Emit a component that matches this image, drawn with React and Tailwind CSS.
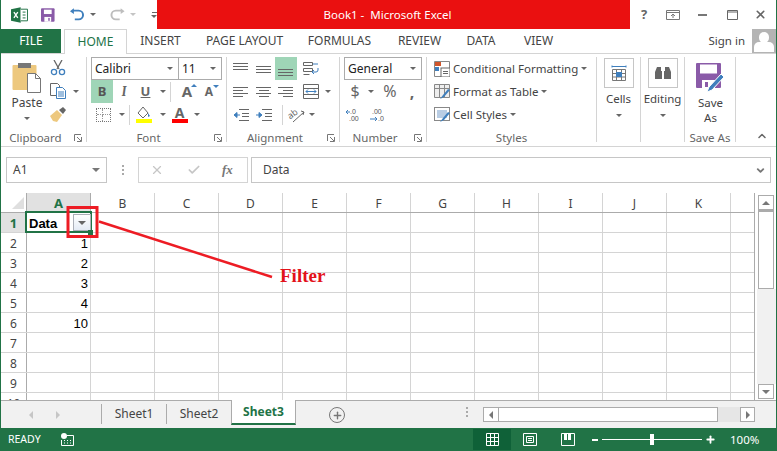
import { ChevronDown, ChevronUp, X, Check, Plus } from "lucide-react";

const COLS = ["B", "C", "D", "E", "F", "G", "H", "I", "J", "K"];
const ROWS = [1, 2, 3, 4, 5, 6, 7, 8, 9, 10];
const VALUES = { 2: "1", 3: "2", 4: "3", 5: "4", 6: "10" };

function Caret({ className = "" }) {
  return <span className={`inline-block w-0 h-0 border-x-[3px] border-x-transparent border-t-[3px] border-t-[#666] ${className}`} />;
}

function Lines({ widths, color = "#666" }) {
  return (
    <svg width="16" height="14" viewBox="0 0 16 14">
      {widths.map((w, i) => (
        <rect key={i} x={w[0]} y={w[2]} width={w[1]} height="1" fill={color} />
      ))}
    </svg>
  );
}

function Launcher() {
  return (
    <svg width="8" height="8" viewBox="0 0 8 8" className="shrink-0">
      <path d="M.5 7V.5H7M7.5 3v4.5H3M3 3l4 4" fill="none" stroke="#777" />
    </svg>
  );
}

function Group({ width, label, launcher, children }) {
  return (
    <div className="flex flex-col h-[85px] border-r border-[#d4d4d4] shrink-0" style={{ width }}>
      <div className="flex-1 min-h-0">{children}</div>
      <div className={`h-[18px] mb-[-5px] flex items-center justify-center relative text-[11.5px] text-[#666] ${launcher ? "pr-[16px]" : ""}`}>
        {label}
        {launcher && <span className="absolute right-[4px] top-[5px] flex"><Launcher /></span>}
      </div>
    </div>
  );
}

function Cell({ w, hl, children }) {
  return (
    <div className={`h-[23px] flex items-center justify-center shrink-0 ${hl ? "bg-[#9fd5b7]" : ""}`} style={{ width: w }}>
      {children}
    </div>
  );
}

function TitleBar() {
  return (
    <div className="h-[29px] flex items-center bg-white shrink-0">
      <div className="w-[156px] flex items-center shrink-0 pl-[10px]">
        <svg width="18" height="16" viewBox="0 0 18 16">
          <path d="M0 2l10-2v16L0 14z" fill="#217346" />
          <path d="M10 2h7v12h-7" fill="#fff" stroke="#217346" />
          <path d="M12 5h3M12 8h3M12 11h3" stroke="#217346" />
          <path d="M3 5l4 6M7 5l-4 6" stroke="#fff" strokeWidth="1.4" />
        </svg>
        <svg width="14" height="14" viewBox="0 0 14 14" className="ml-[13px]">
          <rect width="14" height="14" rx="1" fill="#8a5ba8" />
          <rect x="3" y="1.5" width="8" height="4.5" fill="#fff" />
          <rect x="3.5" y="9" width="7" height="5" fill="#fff" />
          <rect x="7.5" y="10" width="1.5" height="3" fill="#8a5ba8" />
        </svg>
        <svg width="16" height="14" viewBox="0 0 16 14" className="ml-[14px]">
          <path d="M4 2.5h6a4.5 4.5 0 0 1 0 9H6" fill="none" stroke="#3f7fbd" strokeWidth="2" />
          <path d="M5 0v6L1 3z" fill="#3f7fbd" />
        </svg>
        <Caret className="ml-[5px]" />
        <svg width="16" height="14" viewBox="0 0 16 14" className="ml-[14px]">
          <path d="M12 2.5H6a4.5 4.5 0 0 0 0 9h4" fill="none" stroke="#bdbdbd" strokeWidth="2" />
          <path d="M11 0v6l4-3z" fill="#bdbdbd" />
        </svg>
        <Caret className="ml-[5px] border-t-[#c4c4c4]" />
        <span className="ml-[15px] flex flex-col items-center gap-[2px]">
          <span className="w-[5px] h-px bg-[#666]" />
          <Caret />
        </span>
      </div>
      <div className="w-[473px] h-full bg-[#ea1010] flex items-center justify-center text-white text-[11.5px] shrink-0 whitespace-pre pr-[12px]">
        Book1 -  Microsoft Excel
      </div>
      <div className="flex-1 flex items-center pl-[11px] text-[#666]">
        <span className="w-[10px] text-[13px] font-bold leading-none">?</span>
        <svg width="14" height="10" viewBox="0 0 14 10" className="ml-[15px]">
          <path d="M.5.5h13v9H.5zM.5 2.5h13M7 8V4M5 6l2-2 2 2" fill="none" stroke="#777" />
        </svg>
        <span className="ml-[18px] w-[9px] h-[2px] bg-[#777]" />
        <svg width="11" height="10" viewBox="0 0 11 10" className="ml-[20px]">
          <path d="M.5 2h10M.5.5h10v9H.5z" fill="none" stroke="#666" />
        </svg>
        <X size={13} strokeWidth={3} className="ml-[16px] text-[#666]" />
      </div>
    </div>
  );
}

function TabRow() {
  const tabs = [
    ["INSERT", "w-[67px]"],
    ["PAGE LAYOUT", "w-[101px]"],
    ["FORMULAS", "w-[89px]"],
    ["REVIEW", "w-[71px]"],
    ["DATA", "w-[52px]"],
    ["VIEW", "w-[63px]"],
  ];
  return (
    <div className="h-[25px] flex items-stretch shrink-0 border-b border-[#d4d4d4] text-[12px] text-[#444]">
      <div className="w-[60px] bg-[#217346] text-white flex items-center justify-center">FILE</div>
      <div className="w-[63px] ml-[3px] h-[25px] bg-white border border-b-0 border-[#d4d4d4] text-[#217346] flex items-center justify-center">HOME</div>
      {tabs.map(([t, w]) => (
        <div key={t} className={`${w} flex items-center justify-center`}>{t}</div>
      ))}
      <div className="flex-1 flex items-center justify-end">
        <span className="mr-[7px] text-[11.5px]">Sign in</span>
        <div className="w-[24px] h-[24px] bg-[#b4b4b4] overflow-hidden flex flex-col items-center">
          <span className="w-[10px] h-[11px] mt-[3px] rounded-full bg-white" />
          <span className="w-[20px] h-[10px] mt-[-1px] rounded-t-[5px] bg-white" />
        </div>
      </div>
    </div>
  );
}

function Clipboard() {
  return (
    <Group width={86} label="Clipboard" launcher>
      <div className="flex pl-[7px] pt-[3px]">
        <div className="w-[38px] flex flex-col items-center pt-[2px]">
          <svg width="30" height="31" viewBox="0 0 30 31">
            <rect x="0.5" y="3" width="24" height="25" rx="1" fill="#edc87e" />
            <rect x="6" y="1" width="13" height="5" fill="#777" />
            <path d="M15.5 11.5h8l5 5v14h-13z" fill="#fff" stroke="#777" />
            <path d="M23.5 11.5v5h5" fill="none" stroke="#777" />
          </svg>
          <span className="text-[12px] text-[#444] leading-[16px] mt-[2px]">Paste</span>
          <Caret className="mt-[6px]" />
        </div>
        <div className="ml-[4px] flex flex-col">
          <svg width="16" height="16" viewBox="0 0 16 16">
            <path d="M4 0l5 9M12 0L7 9" stroke="#666" strokeWidth="1.3" />
            <circle cx="4" cy="12" r="2.6" fill="none" stroke="#3f7fbd" strokeWidth="1.3" />
            <circle cx="12" cy="12" r="2.6" fill="none" stroke="#3f7fbd" strokeWidth="1.3" />
          </svg>
          <div className="flex items-center mt-[7px]">
            <svg width="16" height="16" viewBox="0 0 16 16">
              <path d="M.5.5h7l2 2v10h-9z" fill="#fff" stroke="#666" />
              <path d="M6.5 4.5h6l3 3v8h-9z" fill="#fff" stroke="#3f7fbd" />
              <path d="M8 9h6M8 11h6M8 13h6" stroke="#3f7fbd" />
            </svg>
            <Caret className="ml-[7px]" />
          </div>
          <svg width="16" height="15" viewBox="0 0 16 15" className="mt-[8px]">
            <path d="M0 9l7-6 5 5-5 7-4-1z" fill="#edc87e" />
            <path d="M9 3l4-3 3 3-3 4z" fill="#666" />
          </svg>
        </div>
      </div>
    </Group>
  );
}

function FontGroup() {
  return (
    <Group width={140} label="Font" launcher>
      <div className="pl-[4px]">
        <div className="flex">
          <div className="w-[88px] h-[23px] border border-[#ababab] flex items-center justify-between pl-[3px] pr-[5px] text-[12px] text-[#222]">
            Calibri<Caret />
          </div>
          <div className="w-[43px] h-[23px] border border-l-0 border-[#ababab] flex items-center justify-between pl-[3px] pr-[5px] text-[12px] text-[#222]">
            11<Caret />
          </div>
        </div>
        <div className="flex items-center">
          <Cell w={22} hl><span className="text-[13px] font-bold text-[#555]">B</span></Cell>
          <Cell w={22}><span className="text-[13px] font-bold italic text-[#666] font-serif">I</span></Cell>
          <Cell w={21}><span className="text-[13px] font-bold text-[#666] underline">U</span></Cell>
          <Cell w={14}><Caret /></Cell>
          <span className="w-px h-[20px] bg-[#d4d4d4]" />
          <Cell w={32}>
            <span className="relative text-[15px] text-[#666] font-bold leading-none">A<span className="absolute -right-[5px] top-0 border-x-[3px] border-x-transparent border-b-[3px] border-b-[#3f7fbd]" /></span>
          </Cell>
          <Cell w={12}>
            <span className="relative text-[12px] text-[#666] font-bold leading-none">A<span className="absolute -right-[6px] -top-[1px] border-x-[3px] border-x-transparent border-t-[3px] border-t-[#3f7fbd]" /></span>
          </Cell>
        </div>
        <div className="flex items-center">
          <Cell w={24}>
            <span className="w-[15px] h-[14px] border border-dotted border-[#777] grid grid-cols-2 grid-rows-2">
              <span className="border-r border-b border-dotted border-[#999]" />
              <span className="border-b border-dotted border-[#999]" />
              <span className="border-r border-dotted border-[#999]" />
            </span>
          </Cell>
          <Cell w={14}><Caret /></Cell>
          <span className="w-px h-[20px] bg-[#d4d4d4]" />
          <Cell w={28}>
            <span className="flex flex-col items-center">
              <svg width="14" height="12" viewBox="0 0 14 12">
                <path d="M6 0l5 6-5 5-5-5z" fill="#fff" stroke="#666" />
                <path d="M11 6l2 3-2 1z" fill="#3f7fbd" />
              </svg>
              <span className="w-[16px] h-[4px] bg-[#ffff00]" />
            </span>
          </Cell>
          <Cell w={9}><Caret /></Cell>
          <Cell w={25}>
            <span className="flex flex-col items-center">
              <span className="text-[14px] leading-[12px] font-bold text-[#666]">A</span>
              <span className="w-[16px] h-[4px] bg-[#ff0000]" />
            </span>
          </Cell>
          <Cell w={9}><Caret /></Cell>
        </div>
      </div>
    </Group>
  );
}

function Alignment() {
  const rows = [
    [[[0, 15, 1], [0, 15, 4], [0, 15, 7]], [[0, 15, 4], [0, 15, 7], [0, 15, 10]], [[0, 15, 7], [0, 15, 10], [0, 15, 13]]],
    [[[0, 15, 2], [0, 10, 5], [0, 15, 8], [0, 10, 11]], [[0, 15, 2], [3, 10, 5], [0, 15, 8], [3, 10, 11]], [[0, 15, 2], [5, 10, 5], [0, 15, 8], [5, 10, 11]]],
  ];
  return (
    <Group width={113} label="Alignment" launcher>
      <div className="pl-[2px]">
        <div className="flex">
          <Cell w={23}><Lines widths={rows[0][0]} /></Cell>
          <Cell w={23}><Lines widths={rows[0][1]} /></Cell>
          <Cell w={22} hl><Lines widths={rows[0][2]} /></Cell>
          <Cell w={6} />
          <Cell w={16}>
            <svg width="16" height="14" viewBox="0 0 16 14">
              <path d="M.5.5h9v3h-9zM.5 6.5h9v3h-9zM.5 12.5h6" fill="none" stroke="#666" />
              <path d="M10 2h5M15 6v2a2 2 0 0 1-2 2H9M11 8l-2 2 2 2" fill="none" stroke="#3f7fbd" />
            </svg>
          </Cell>
        </div>
        <div className="flex">
          <Cell w={23}><Lines widths={rows[1][0]} /></Cell>
          <Cell w={23}><Lines widths={rows[1][1]} /></Cell>
          <Cell w={22}><Lines widths={rows[1][2]} /></Cell>
          <Cell w={6} />
          <Cell w={16}>
            <svg width="16" height="15" viewBox="0 0 16 15">
              <path d="M.5.5h15v14H.5zM.5 4.5h15M.5 10.5h15" fill="none" stroke="#666" />
              <path d="M3 7.5h10M5 5.5l-2 2 2 2M11 5.5l2 2-2 2" fill="none" stroke="#3f7fbd" />
            </svg>
          </Cell>
          <Cell w={18}><Caret /></Cell>
        </div>
        <div className="flex items-center">
          <Cell w={23}>
            <svg width="16" height="12" viewBox="0 0 16 12">
              <path d="M6 .5h10M9 4.5h7M9 7.5h7M6 11.5h10" stroke="#666" />
              <path d="M7 6H2M4 3.5L1 6l3 2.5z" fill="#3f7fbd" stroke="#3f7fbd" />
            </svg>
          </Cell>
          <Cell w={23}>
            <svg width="16" height="12" viewBox="0 0 16 12">
              <path d="M6 .5h10M9 4.5h7M9 7.5h7M6 11.5h10" stroke="#666" />
              <path d="M0 6h5M3 3.5L6 6 3 8.5z" fill="#3f7fbd" stroke="#3f7fbd" />
            </svg>
          </Cell>
          <Cell w={7} />
          <span className="w-px h-[20px] bg-[#d4d4d4]" />
          <Cell w={26}>
            <span className="relative flex w-[18px] h-[16px]">
              <span className="absolute left-0 top-[1px] text-[9px] leading-[11px] text-[#666] -rotate-[35deg]">ab</span>
              <svg width="18" height="16" viewBox="0 0 18 16">
                <path d="M6 15L17 5M14 4l3 1-1 3" fill="none" stroke="#666" />
              </svg>
            </span>
          </Cell>
          <Cell w={6}><Caret /></Cell>
        </div>
      </div>
    </Group>
  );
}

function NumberGroup() {
  return (
    <Group width={87} label="Number" launcher>
      <div className="pl-[4px]">
        <div className="w-[78px] h-[23px] border border-[#ababab] flex items-center justify-between pl-[3px] pr-[5px] text-[12px] text-[#222]">
          General<Caret />
        </div>
        <div className="flex items-center text-[#666]">
          <span className="w-[22px] text-center text-[16px] leading-[23px]">$</span>
          <Caret className="ml-[2px]" />
          <span className="w-[28px] text-center text-[16px] leading-[23px] ml-[2px]">%</span>
          <span className="ml-[3px] w-[10px] text-center text-[16px] font-bold leading-[18px]">,</span>
        </div>
        <div className="flex items-center pl-[2px] h-[23px] gap-[7px]">
          <svg width="16" height="14" viewBox="0 0 16 14">
            <text x="4" y="6" fontSize="7" fill="#555" fontFamily="Liberation Sans">.0</text>
            <text x="3" y="13" fontSize="7" fill="#555" fontFamily="Liberation Sans">.00</text>
            <path d="M0 4h4M2 2L0 4l2 2" stroke="#3f7fbd" fill="none" />
          </svg>
          <svg width="16" height="14" viewBox="0 0 16 14">
            <text x="3" y="6" fontSize="7" fill="#555" fontFamily="Liberation Sans">.00</text>
            <text x="9" y="13" fontSize="7" fill="#555" fontFamily="Liberation Sans">.0</text>
            <path d="M1 11h7M6 9l2 2-2 2" stroke="#3f7fbd" fill="none" />
          </svg>
        </div>
      </div>
    </Group>
  );
}

function StyleRow({ label, caret, children }) {
  return (
    <div className="h-[23px] flex items-center text-[11.5px] text-[#444] whitespace-nowrap">
      <svg width="16" height="16" viewBox="0 0 16 16" className="shrink-0 mr-[3px]">{children}</svg>
      {label}
      {caret && <Caret className="ml-[3px]" />}
    </div>
  );
}

function Styles() {
  return (
    <Group width={170} label="Styles">
      <div className="pl-[7px]">
        <StyleRow label="Conditional Formatting" caret>
          <path d="M.5.5h15v15H.5z" fill="#fff" stroke="#888" />
          <rect x="1" y="1" width="6" height="4" fill="#d0552b" />
          <rect x="1" y="6" width="4" height="4" fill="#3f7fbd" />
          <rect x="7" y="7" width="9" height="9" fill="#fff" stroke="#666" />
          <path d="M9 10.5h5M9 12.5h5" stroke="#666" />
        </StyleRow>
        <StyleRow label="Format as Table" caret>
          <path d="M.5.5h15v13H.5zM.5 4.5h15M5.5.5v13M10.5.5v13" fill="#eee" stroke="#888" />
          <path d="M6 15l3-4 5-6 2 1-6 7z" fill="#3f7fbd" />
        </StyleRow>
        <StyleRow label="Cell Styles" caret>
          <rect x="0.5" y="0.5" width="15" height="13" fill="#fff" stroke="#888" />
          <rect x="3" y="3" width="10" height="8" fill="#b9cde4" />
          <path d="M6 15l3-4 5-6 2 1-6 7z" fill="#3f7fbd" />
        </StyleRow>
      </div>
    </Group>
  );
}

function BigButton({ width, label, children }) {
  return (
    <Group width={width} label="">
      <div className="flex flex-col items-center pt-[1px]">
        <div className="w-[30px] h-[30px] border border-[#c6c6c6] flex items-center justify-center">{children}</div>
        <span className="text-[11.5px] text-[#444] mt-[3px] leading-[16px]">{label}</span>
        <Caret className="mt-[7px]" />
      </div>
    </Group>
  );
}

function Ribbon() {
  return (
    <div className="h-[93px] flex items-start shrink-0 border-b border-[#d4d4d4] pt-[3px]">
      <Clipboard />
      <FontGroup />
      <Alignment />
      <NumberGroup />
      <Styles />
      <BigButton width={44} label="Cells">
        <svg width="16" height="17" viewBox="0 0 16 17">
          <path d="M1 1.5h14M1 .5v2M15 .5v2" stroke="#3f7fbd" />
          <path d="M1.5 4.5h13v11h-13zM1.5 8.5h13M1.5 12h13M5.5 4.5v11M10.5 4.5v11" fill="#fff" stroke="#777" />
          <rect x="5" y="7" width="6" height="5" fill="#3f7fbd" />
        </svg>
      </BigButton>
      <BigButton width={44} label="Editing">
        <svg width="16" height="14" viewBox="0 0 16 14">
          <path d="M2 1h4v4h1v8H0V6zM14 1h-4v4H9v8h7V6z" fill="#666" />
        </svg>
      </BigButton>
      <Group width={51} label="Save As">
        <div className="flex flex-col items-center pt-[6px] pl-[1px]">
          <svg width="30" height="30" viewBox="0 0 30 30">
            <rect width="25" height="25" rx="1" fill="#8a5ba8" />
            <rect x="4" y="1.5" width="17" height="9" fill="#fff" />
            <rect x="6" y="17" width="13" height="8" fill="#fff" />
            <rect x="9" y="19" width="3" height="5" fill="#8a5ba8" />
            <path d="M11 29l2-5 12-13 3 3-12 13z" fill="#3f7fbd" stroke="#fff" />
          </svg>
          <span className="text-[11.5px] text-[#444] leading-[15px] mt-[2px]">Save</span>
          <span className="text-[11.5px] text-[#444] leading-[15px]">As</span>
        </div>
      </Group>
      <div className="flex-1 h-[85px] flex items-end justify-end pr-[8px]">
        <ChevronUp size={12} strokeWidth={3} className="text-[#666]" />
      </div>
    </div>
  );
}

function FormulaBar() {
  return (
    <div className="h-[26px] mt-[10px] ml-[5px] mr-[5px] flex items-stretch shrink-0 text-[12px] text-[#444]">
      <div className="w-[101px] border border-[#c6c6c6] flex items-center justify-between pl-[6px] pr-[6px]">
        A1<Caret className="border-x-[4px] border-t-[4px] border-t-[#777]" />
      </div>
      <div className="w-[31px] flex flex-col items-center justify-center gap-[2px]">
        <span className="w-[2px] h-[2px] bg-[#aaa]" />
        <span className="w-[2px] h-[2px] bg-[#aaa]" />
        <span className="w-[2px] h-[2px] bg-[#aaa]" />
      </div>
      <div className="w-[110px] border border-[#d4d4d4] flex items-center pl-[11px]">
        <X size={14} className="text-[#c6c6c6]" />
        <Check size={14} strokeWidth={3} className="text-[#c6c6c6] ml-[23px]" />
        <span className="ml-[21px] font-['Liberation_Serif'] italic font-bold text-[13px] text-[#777]">fx</span>
      </div>
      <div className="w-[3px]" />
      <div className="flex-1 border border-[#c6c6c6] flex items-center justify-between pl-[11px] pr-[4px]">
        Data
        <ChevronDown size={11} strokeWidth={4} className="text-[#777]" />
      </div>
    </div>
  );
}

function VScroll() {
  return (
    <div className="flex-1 flex flex-col pl-[2px]">
      <div className="h-[15px] w-[16px] mt-[2px] ml-px border border-[#ababab] flex items-center justify-center">
        <span className="border-x-[4px] border-x-transparent border-b-[4px] border-b-[#777]" />
      </div>
      <div className="h-[79px] w-[16px] ml-px border-x border-b border-t-2 border-[#ababab]" />
      <div className="flex-1 bg-[#f1f1f1]" />
      <div className="bg-white h-[16px] flex items-start">
        <div className="h-[15px] w-[16px] ml-px border border-[#ababab] bg-white flex items-center justify-center">
          <Caret className="border-x-[4px] border-t-[4px] border-t-[#777]" />
        </div>
      </div>
    </div>
  );
}

function Sheet() {
  return (
    <div className="relative mt-[10px] flex-1 min-h-0 overflow-hidden flex text-[12px] text-[#444]">
      <div className="w-[754px] shrink-0 overflow-hidden border-r border-[#ababab]">
        <div className="flex h-[20px] border-b border-[#ababab]">
          <div className="w-[26px] shrink-0 border-r border-[#ababab] flex items-end justify-end pr-[2px] pb-[3px]">
            <span className="border-l-[12px] border-l-transparent border-b-[12px] border-b-[#dfdfdf]" />
          </div>
          <div className="w-[64px] shrink-0 bg-[#e1e1e1] border-r border-[#ababab] flex items-center justify-center pt-[2px] font-bold text-[#217346] text-[13px]">A</div>
          {COLS.map((c) => (
            <div key={c} className="w-[64px] shrink-0 border-r border-[#d4d4d4] flex items-center justify-center pt-[2px]">{c}</div>
          ))}
        </div>
        {ROWS.map((r) => (
          <div key={r} className="flex h-[20px] border-b border-[#d4d4d4]">
            <div className={`w-[26px] shrink-0 border-r border-[#ababab] flex items-center justify-center pt-[2px] ${r === 1 ? "bg-[#e1e1e1] font-bold text-[#217346] text-[13px]" : ""}`}>{r}</div>
            <div className={`w-[64px] shrink-0 border-r border-[#d4d4d4] flex items-center px-[2px] pt-[2px] font-['Liberation_Sans'] text-black text-[13px] ${r === 1 ? "font-bold justify-start" : "justify-end"}`}>
              {r === 1 ? "Data" : VALUES[r]}
            </div>
            {COLS.map((c) => (
              <div key={c} className="w-[64px] shrink-0 border-r border-[#d4d4d4]" />
            ))}
          </div>
        ))}
      </div>
      <VScroll />
      {/* selected cell */}
      <div className="absolute left-[24px] top-[18px] w-[67px] h-[22px] border-2 border-[#217346]" />
      <div className="absolute left-[72px] top-[21px] w-[18px] h-[17px] bg-gradient-to-b from-white to-[#e4ebf5] border border-[#abafb8] flex items-center justify-center">
        <Caret className="border-x-[4px] border-t-[4px] border-t-[#666]" />
      </div>
      <div className="absolute left-[87px] top-[37px] w-[5px] h-[5px] bg-[#217346]" />
    </div>
  );
}

function SheetTabs() {
  return (
    <div className="h-[28px] shrink-0 bg-[#f1f1f1] flex border-t border-[#ababab] text-[12px] text-[#444] relative">
      <div className="w-[100px] flex items-center pl-[28px] gap-[23px] shrink-0">
        <span className="border-y-[4px] border-y-transparent border-r-[4px] border-r-[#c6c6c6]" />
        <span className="border-y-[4px] border-y-transparent border-l-[4px] border-l-[#c6c6c6]" />
      </div>
      <div className="w-[65px] h-[20px] mt-[3px] border-l border-[#ababab] flex items-center justify-center">Sheet1</div>
      <div className="w-[65px] h-[20px] mt-[3px] border-l border-[#ababab] flex items-center justify-center">Sheet2</div>
      <div className="w-[65px] h-[25px] mt-[-1px] bg-white border-x border-[#ababab] border-b-2 border-b-[#217346] flex items-center justify-center font-bold text-[#217346]">Sheet3</div>
      <div className="w-[16px] h-[16px] ml-[33px] mt-[6px] rounded-full border border-[#777] flex items-center justify-center">
        <Plus size={11} strokeWidth={3} className="text-[#777]" />
      </div>
      <div className="ml-[121px] mt-[6px] flex flex-col gap-[2px] w-[3px]">
        <span className="w-[2px] h-[2px] bg-[#aaa]" />
        <span className="w-[2px] h-[2px] bg-[#aaa]" />
        <span className="w-[2px] h-[2px] bg-[#aaa]" />
      </div>
      <div className="ml-[14px] mt-[6px] w-[272px] h-[15px] flex">
        <div className="w-[16px] border border-[#ababab] bg-white flex items-center justify-center">
          <span className="border-y-[4px] border-y-transparent border-r-[4px] border-r-[#777]" />
        </div>
        <div className="w-[219px] border-y border-r border-[#ababab] bg-white" />
        <div className="flex-1 bg-[#e6e6e6]" />
        <div className="w-[15px] border border-[#ababab] bg-white flex items-center justify-center">
          <span className="border-y-[4px] border-y-transparent border-l-[4px] border-l-[#777]" />
        </div>
      </div>
    </div>
  );
}

function StatusBar() {
  return (
    <div className="h-[23px] shrink-0 bg-[#217346] -mx-px flex items-center text-[10.5px] text-white">
      <span className="ml-[8px] w-[33px]">READY</span>
      <svg width="13" height="13" viewBox="0 0 13 13" className="ml-[20px] shrink-0">
        <circle cx="3" cy="3" r="3" fill="#fff" />
        <path d="M6 2.5h6.5V12.5H.5V7" fill="none" stroke="#fff" />
        <path d="M3 7.5h1M6 7.5h1M9 7.5h1M3 10h1M6 10h1M9 10h1" stroke="#fff" />
      </svg>
      <div className="ml-[399px] w-[38px] h-[21px] bg-[#0f6138] flex items-center justify-center shrink-0">
        <svg width="13" height="13" viewBox="0 0 13 13">
          <path d="M.5.5h12v12H.5zM.5 4.5h12M.5 8.5h12M4.5.5v12M8.5.5v12" fill="none" stroke="#fff" />
        </svg>
      </div>
      <svg width="14" height="13" viewBox="0 0 14 13" className="ml-[12px] shrink-0">
        <path d="M.5.5h13v12H.5zM3.5 3.5h7v6h-7zM5 5.5h4M5 7.5h4" fill="none" stroke="#fff" />
      </svg>
      <svg width="14" height="13" viewBox="0 0 14 13" className="ml-[24px] shrink-0">
        <path d="M.5.5h13v12H.5z" fill="none" stroke="#fff" />
        <path d="M3 1h3v6H3zM7 1h3v6H7z" fill="#fff" />
      </svg>
      <span className="ml-[17px] w-[6px] h-[2px] bg-white shrink-0" />
      <div className="ml-[4px] w-[100px] h-px bg-white relative shrink-0">
        <span className="absolute left-[48px] -top-[5px] w-[4px] h-[11px] bg-white" />
      </div>
      <Plus size={11} strokeWidth={4} className="ml-[3px] shrink-0" />
      <span className="ml-[14px] text-[11.5px]">100%</span>
    </div>
  );
}

export default function App() {
  return (
    <div className="relative w-[777px] h-[451px] bg-white overflow-hidden flex flex-col border-x border-[#217346] font-['Noto_Sans','Open_Sans',sans-serif]">
      <TitleBar />
      <TabRow />
      <Ribbon />
      <FormulaBar />
      <Sheet />
      <SheetTabs />
      <StatusBar />
      {/* callout drawn over the sheet */}
      <svg width="777" height="451" className="absolute left-[-1px] top-0 pointer-events-none">
        <rect x="68" y="207.5" width="29" height="29" fill="none" stroke="#ed1c24" strokeWidth="3" />
        <path d="M99 221.5L272 277" stroke="#ed1c24" strokeWidth="2.5" />
      </svg>
      <span className="absolute left-[279px] top-[266px] text-[19px] leading-[20px] font-bold text-[#e3121a] font-['Liberation_Serif',serif]">Filter</span>
    </div>
  );
}
